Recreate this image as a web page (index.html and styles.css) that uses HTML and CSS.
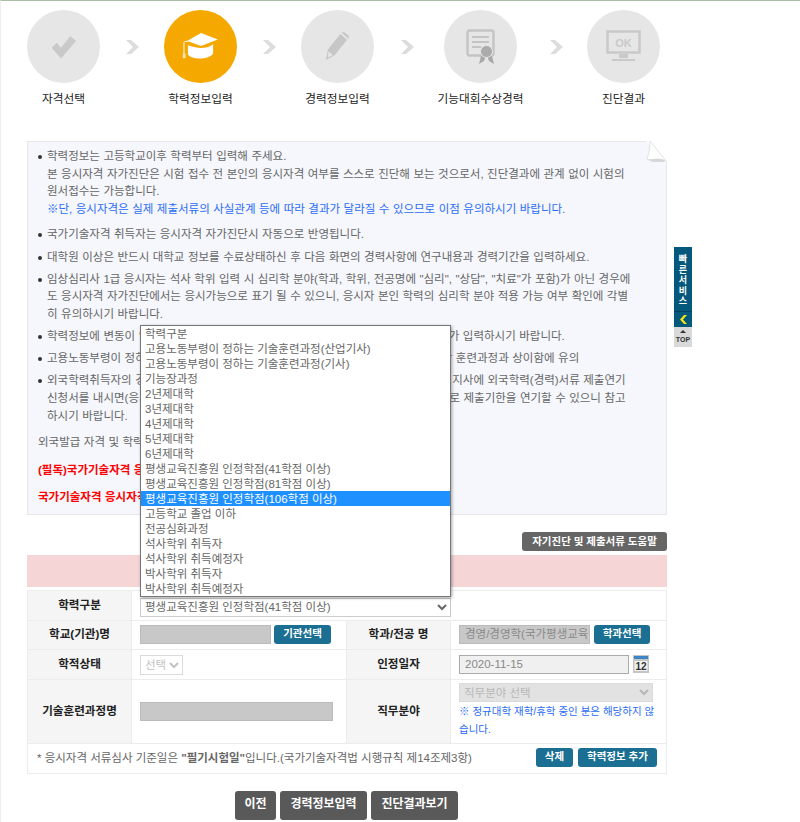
FILE: index.html
```html
<!DOCTYPE html>
<html lang="ko">
    <head>
        <title>자가진단</title>
        <link rel="stylesheet" href="styles.css">
    </head>
    <body>
        <div class="wrapper">
            <ul class="steps">
                <li class="step">
                    <span class="circle">
                        <svg width="27" height="25" viewBox="0 0 40 40"><path d="M1 22 L9 14 L16 22 L31 3 L40 11 L16 39 Z" fill="#c9c9c9"/></svg>
                    </span>
                    <p>자격선택</p>
                </li>
                <li class="arrow"><svg width="13" height="14" viewBox="0 0 13 14"><path d="M0 0 H5 L13 7 L5 14 H0 L7 7 Z" fill="#dcdcdc"/></svg></li>
                <li class="step on">
                    <span class="circle">
                        <svg width="38" height="28" viewBox="0 0 40 30"><path d="M20 0 L38 7 L20 14 L7 9 L2 10 V9 L6 8 Z" fill="#fff"/><path d="M6 13 C12 15 16 16 20 16 C25 16 29 15 33 12 V22 C29 29 10 29 6 23 Z" fill="#fff"/><path d="M1 10 H2.5 V22 H3.5 V27 H0.5 V22 H1 Z" fill="#fbe3ae"/></svg>
                    </span>
                    <p>학력정보입력</p>
                </li>
                <li class="arrow"><svg width="13" height="14" viewBox="0 0 13 14"><path d="M0 0 H5 L13 7 L5 14 H0 L7 7 Z" fill="#dcdcdc"/></svg></li>
                <li class="step">
                    <span class="circle">
                        <svg width="23" height="29" viewBox="0 0 24 30"><path d="M0 29 L2 18 L15 2 L22 8 L9 24 Z" fill="#c6c6c6"/><path d="M16 0.5 L19 0 L24 4 L23.5 7 Z" fill="#c6c6c6"/><path d="M2.5 20 L7 24 L2 26.5 Z" fill="#e6e6e6"/></svg>
                    </span>
                    <p>경력정보입력</p>
                </li>
                <li class="arrow wide back"><svg width="13" height="14" viewBox="0 0 13 14"><path d="M0 0 H5 L13 7 L5 14 H0 L7 7 Z" fill="#dcdcdc"/></svg></li>
                <li class="step">
                    <span class="circle">
                        <svg width="30" height="36" viewBox="0 0 30 36"><rect x="1.5" y="1.5" width="26" height="25" rx="2" fill="none" stroke="#c4c4c4" stroke-width="2.4"/><path d="M6 8 H23 M6 13 H23 M6 18 H15" stroke="#c4c4c4" stroke-width="2"/><path d="M15 27 L13 35 L18 32 L20 27 Z M21 27 L23 32 L28 35 L26 27 Z" fill="#a9a9a9"/><circle cx="20.500" cy="22.500" r="6" fill="#ababab" stroke="#e6e6e6"/></svg>
                    </span>
                    <p>기능대회수상경력</p>
                </li>
                <li class="arrow wide fwd"><svg width="13" height="14" viewBox="0 0 13 14"><path d="M0 0 H5 L13 7 L5 14 H0 L7 7 Z" fill="#dcdcdc"/></svg></li>
                <li class="step">
                    <span class="circle">
                        <svg width="36" height="34" viewBox="0 0 36 34"><rect x="1.500" y="1.500" width="32" height="21" fill="none" stroke="#c9c9c9" stroke-width="2.500"/><path d="M13 24 H22 V28 H13 Z M6 29 H29 V31 H6 Z" fill="#c9c9c9"/><text x="17.500" y="17" text-anchor="middle" class="ok">OK</text></svg>
                    </span>
                    <p>진단결과</p>
                </li>
            </ul>

            <div class="info">
                <svg class="fold" width="21" height="21" viewBox="0 0 21 21"><path d="M0 0 H21 V21 Z" fill="#fff"/><path d="M4 0 L20 20 C12 16 5 20 1 18 C3 12 4 6 4 0 Z" fill="#fff" stroke="#e2e2e2"/><path d="M1 18 C5 20 10 15 20 20 C12 23 5 21 1 18 Z" fill="#d5d7d6"/></svg>
                <ul class="notes">
                    <li>학력정보는 고등학교이후 학력부터 입력해 주세요.<br>
                    본 응시자격 자가진단은 시험 접수 전 본인의 응시자격 여부를 스스로 진단해 보는 것으로서, 진단결과에 관계 없이 시험의<br>
                    원서접수는 가능합니다.<br>
                    <span class="blue">※단, 응시자격은 실제 제출서류의 사실관계 등에 따라 결과가 달라질 수 있으므로 이점 유의하시기 바랍니다.</span></li>
                    <li>국가기술자격 취득자는 응시자격 자가진단시 자동으로 반영됩니다.</li>
                    <li>대학원 이상은 반드시 대학교 정보를 수료상태하신 후 다음 화면의 경력사항에 연구내용과 경력기간을 입력하세요.</li>
                    <li>임상심리사 1급 응시자는 석사 학위 입력 시 심리학 분야(학과, 학위, 전공명에 "심리", "상담", "치료"가 포함)가 아닌 경우에<br>
                    도 응시자격 자가진단에서는 응시가능으로 표기 될 수 있으니, 응시자 본인 학력의 심리학 분야 적용 가능 여부 확인에 각별<br>
                    히 유의하시기 바랍니다.</li>
                    <li>학력정보에 변동이 있는 경우에는 응시자격 자가진단을 다시 실시하여 학력정보를 추가 입력하시기 바랍니다.</li>
                    <li>고용노동부령이 정하는 기술훈련과정은 직업능력개발훈련 과정과 다르므로 특히 일반 훈련과정과 상이함에 유의</li>
                    <li>외국학력취득자의 경우 서류제출 기간내에 서류 제출이 어려우면 응시 서류심사 관할 지사에 외국학력(경력)서류 제출연기<br>
                    신청서를 내시면(응시자격 서류제출 기간내 연기신청필요) 해당 서류제출기간과 별도로 제출기한을 연기할 수 있으니 참고<br>
                    하시기 바랍니다.</li>
                </ul>
                <p class="plain">외국발급 자격 및 학력 서류는 번역본과 함께 제출하시기 바랍니다.</p>
                <p class="red">(필독)국가기술자격 응시자격 안내</p>
                <p class="red">국가기술자격 응시자격 자가진단 결과는 참고용입니다.</p>
            </div>

            <div class="help"><a class="btn gray">자기진단 및 제출서류 도움말</a></div>
            <div class="pink"></div>

            <div class="form-area">
                <table class="form">
                    <colgroup>
                        <col class="c1"><col class="c2"><col class="c3"><col class="c4">
                    </colgroup>
                    <tr class="r1">
                        <th>학력구분</th>
                        <td colspan="3"><select class="sel-wide"><option>평생교육진흥원 인정학점(41학점 이상)</option></select></td>
                    </tr>
                    <tr class="r2">
                        <th>학교(기관)명</th>
                        <td><span class="inp school"></span><a class="btn teal">기관선택</a></td>
                        <th>학과/전공 명</th>
                        <td class="right"><span class="inp major">경영/경영학(국가평생교육</span><a class="btn teal">학과선택</a></td>
                    </tr>
                    <tr class="r3">
                        <th>학적상태</th>
                        <td><select class="sel-small" disabled><option>선택</option></select></td>
                        <th>인정일자</th>
                        <td class="right"><span class="inp date">2020-11-15</span>
                            <svg class="cal" width="16" height="18" viewBox="0 0 16 18"><rect width="16" height="18" fill="#c4c4c4"/><rect x="1" y="1" width="14" height="3" fill="#3d85c6"/><rect x="1.500" y="6" width="13" height="10" fill="#f1f1f1"/><text x="8" y="15" text-anchor="middle" class="cal-num">12</text></svg>
                        </td>
                    </tr>
                    <tr class="r4">
                        <th>기술훈련과정명</th>
                        <td><span class="inp course"></span></td>
                        <th>직무분야</th>
                        <td class="right">
                            <select class="sel-job" disabled><option>직무분야 선택</option></select>
                            <p class="blue small">※ 정규대학 재학/휴학 중인 분은 해당하지 않습니다.</p>
                        </td>
                    </tr>
                    <tr class="r5">
                        <td colspan="4">
                            <div class="foot">
                                <p>* 응시자격 서류심사 기준일은 <b>"필기시험일"</b>입니다.(국가기술자격법 시행규칙 제14조제3항)</p>
                                <div class="foot-btns"><a class="btn teal">삭제</a><a class="btn teal">학력정보 추가</a></div>
                            </div>
                        </td>
                    </tr>
                </table>

                <ul class="popup">
                    <li>학력구분</li>
                    <li>고용노동부령이 정하는 기술훈련과정(산업기사)</li>
                    <li>고용노동부령이 정하는 기술훈련과정(기사)</li>
                    <li>기능장과정</li>
                    <li>2년제대학</li>
                    <li>3년제대학</li>
                    <li>4년제대학</li>
                    <li>5년제대학</li>
                    <li>6년제대학</li>
                    <li>평생교육진흥원 인정학점(41학점 이상)</li>
                    <li>평생교육진흥원 인정학점(81학점 이상)</li>
                    <li class="active">평생교육진흥원 인정학점(106학점 이상)</li>
                    <li>고등학교 졸업 이하</li>
                    <li>전공심화과정</li>
                    <li>석사학위 취득자</li>
                    <li>석사학위 취득예정자</li>
                    <li>박사학위 취득자</li>
                    <li>박사학위 취득예정자</li>
                </ul>
            </div>

            <div class="bottom">
                <a class="btn dark">이전</a>
                <a class="btn dark">경력정보입력</a>
                <a class="btn dark">진단결과보기</a>
            </div>
        </div>

        <div class="quick">
            <p class="quick-title">빠<br>른<br>서<br>비<br>스</p>
            <p class="quick-arrow"><svg width="7" height="9" viewBox="0 0 7 9"><path d="M7 0 L3 4.500 L7 9 H4 L0 4.500 L4 0 Z" fill="#f5e614"/></svg></p>
            <p class="quick-top"><i></i>TOP</p>
        </div>
    </body>
</html>
```

FILE: styles.css
```css
*{
margin: 0;
padding: 0;
box-sizing: border-box;
font-family: "Liberation Sans", "Noto Sans CJK KR", sans-serif;
}
body{
position: relative;
background: #fff;
border-top: 1px solid #a9bfa4;
border-left: 1px solid #eee;
height: 822px;
overflow: hidden;
color: #666;
font-size: 11.500px;
}
ul{
list-style: none;
}
.wrapper{
width: 640px;
margin-left: 26px;
}

/* steps */
.steps{
display: flex;
padding-top: 9px;
height: 140px;
}
.step{
width: 73px;
display: flex;
flex-direction: column;
align-items: center;
}
.step p{
margin-top: 7px;
font-size: 11.700px;
line-height: 18px;
color: #222;
white-space: nowrap;
}
.circle{
width: 73px;
height: 73px;
border-radius: 50%;
background: #e6e6e6;
display: flex;
align-items: center;
justify-content: center;
}
.step.on .circle{
background: #f5a800;
}
.arrow{
width: 64px;
height: 73px;
display: flex;
align-items: center;
justify-content: center;
}
.arrow.wide{
width: 70px;
}
.arrow.back{
padding-right: 4px;
}
.arrow.fwd{
padding-left: 8px;
}
.ok{
font: bold 11px "Liberation Sans", sans-serif;
fill: #c9c9c9;
}

/* info box */
.info{
position: relative;
height: 374px;
padding: 6px 10px 0 10px;
background: #f5f7fc;
border: 1px solid #e7e7e7;
line-height: 17.700px;
word-spacing: 0.300px;
}
.fold{
position: absolute;
top: -1px;
right: -1px;
}
.notes li{
position: relative;
padding-left: 9px;
margin-bottom: 4.400px;
}
.notes li:first-child{
margin-bottom: 7.600px;
}
.notes li::before{
content: "";
position: absolute;
left: 0;
top: 7px;
width: 4px;
height: 4px;
border-radius: 50%;
background: #333;
}
.blue{
color: #2b6cf6;
}
.plain{
margin-top: 9px;
}
.red{
margin-top: 9.500px;
color: #f00;
font-weight: bold;
}

/* form */
.help{
display: flex;
justify-content: flex-end;
margin-top: 17px;
}
.btn{
display: inline-block;
border-radius: 3px;
color: #fff;
font-weight: bold;
text-align: center;
white-space: nowrap;
}
.gray{
width: 145px;
height: 19px;
line-height: 18px;
background: #666;
font-size: 10.500px;
}
.pink{
height: 32px;
margin-top: 4px;
background: #f5d5d5;
}
.form-area{
position: relative;
margin-top: 3px;
}
.form{
width: 640px;
table-layout: fixed;
border-collapse: collapse;
border: 1px solid #ececec;
}
.c1{
width: 104px;
}
.c2{
width: 215px;
}
.c3{
width: 104px;
}
.form th, .form td{
border: 1px solid #ececec;
vertical-align: middle;
}
.form th{
padding-bottom: 4px;
background: #f5f5f5;
color: #222;
font-size: 11.600px;
font-weight: bold;
}
.form td{
padding-left: 8px;
background: #fff;
}
.r1{
height: 30px;
}
.r2{
height: 29px;
}
.r2 td{
padding-bottom: 2px;
}
.r3{
height: 30px;
}
.r3 .right{
padding-bottom: 1px;
}
.r4{
height: 64px;
}
.r5{
height: 30px;
}
select{
font-size: 11.500px;
color: #666;
background: #fff;
border: 1px solid #ccc;
}
.sel-wide{
display: block;
width: 311px;
height: 19px;
margin-top: 3px;
}
.sel-small{
display: block;
width: 43px;
height: 20px;
color: #aaa;
}
.sel-job{
display: block;
width: 194px;
height: 19px;
background: #d6d6d6;
color: #999;
}
.inp{
display: inline-block;
vertical-align: middle;
height: 19px;
line-height: 17px;
background: #c8c8c8;
border: 1px solid #bbb;
overflow: hidden;
white-space: nowrap;
}
.school{
width: 131px;
}
.course{
width: 193px;
}
.major{
width: 131px;
padding-left: 5px;
color: #888;
}
.date{
width: 170px;
padding-left: 5px;
background: #f0f0f0;
border-color: #aaa;
color: #888;
}
.cal{
vertical-align: middle;
margin-left: 1px;
}
.cal-num{
font: bold 10px "Liberation Sans", sans-serif;
fill: #333;
}
.teal{
height: 19px;
line-height: 17px;
background: #1b6f93;
font-size: 10.500px;
vertical-align: middle;
}
.form td .teal{
width: 57px;
margin-left: 3px;
}
.form td.right .teal{
width: 56px;
margin-left: 4px;
}
.small{
margin-top: 1px;
margin-bottom: 2px;
padding-right: 8px;
line-height: 17.500px;
font-size: 10.500px;
}
.foot{
display: flex;
align-items: center;
justify-content: space-between;
padding: 0 9px 3px 1px;
}
.foot-btns{
display: flex;
gap: 5px;
}
.form .foot-btns .teal{
width: 37px;
margin-left: 0;
}
.form .foot-btns .teal:last-child{
width: 79px;
}

/* open select list */
.popup{
position: absolute;
left: 113px;
top: -265px;
width: 311px;
height: 272px;
border: 1px solid #767676;
background: #fff;
box-shadow: 1px 1px 3px rgba(0,0,0,0.35);
}
.popup li{
height: 15px;
line-height: 17px;
padding-left: 4px;
}
.popup .active{
background: #1e90ff;
color: #fff;
}

/* bottom buttons */
.bottom{
display: flex;
justify-content: center;
gap: 4px;
margin-top: 17px;
padding-right: 1px;
}
.dark{
height: 29px;
line-height: 27px;
width: 41px;
background: #595959;
font-size: 12px;
}
.dark + .dark{
width: 87px;
}

/* quick menu */
.quick{
position: absolute;
left: 673px;
top: 246px;
width: 18px;
text-align: center;
}
.quick-title{
height: 65px;
padding-top: 7px;
background: #03587c;
border-bottom: 1px solid #02405c;
color: #fff;
font-size: 9px;
font-weight: bold;
line-height: 10.500px;
}
.quick-arrow{
height: 15px;
background: #03587c;
display: flex;
align-items: center;
justify-content: center;
}
.quick-top{
height: 20px;
padding-top: 7px;
background: #d9d9d9;
color: #333;
font: bold 7px/11px "Liberation Sans", sans-serif;
position: relative;
}
.quick-top i{
position: absolute;
left: 6px;
top: 3px;
border: 3px solid transparent;
border-top: 0;
border-bottom: 3px solid #333;
}
```
